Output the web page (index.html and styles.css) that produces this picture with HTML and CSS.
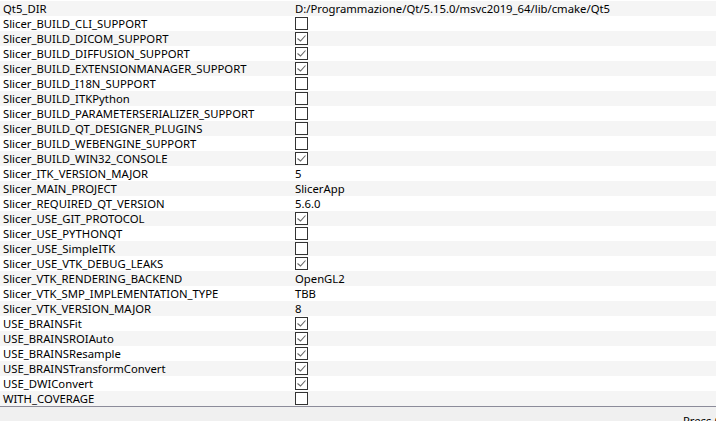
FILE: index.html
```html
<!DOCTYPE html>
<html lang="en">
<head>
    <meta charset="UTF-8">
    <title>CMake</title>
    <link rel="stylesheet" href="styles.css">
</head>
<body>

    <svg width="0" height="0" class="defs">
        <symbol id="tick" viewBox="0 0 11 11">
            <polyline points="1.5,5.5 4.5,8 9.5,2.5" fill="none" stroke="#666" stroke-width="1.1"/>
        </symbol>
    </svg>

    <div class="cache">
        <div class="row"><span class="name">Qt5_DIR</span><span class="value">D:/Programmazione/Qt/5.15.0/msvc2019_64/lib/cmake/Qt5</span></div>
        <div class="row"><span class="name">Slicer_BUILD_CLI_SUPPORT</span><span class="value"><i class="box"></i></span></div>
        <div class="row"><span class="name">Slicer_BUILD_DICOM_SUPPORT</span><span class="value"><i class="box"><svg><use href="#tick"/></svg></i></span></div>
        <div class="row"><span class="name">Slicer_BUILD_DIFFUSION_SUPPORT</span><span class="value"><i class="box"><svg><use href="#tick"/></svg></i></span></div>
        <div class="row"><span class="name">Slicer_BUILD_EXTENSIONMANAGER_SUPPORT</span><span class="value"><i class="box"><svg><use href="#tick"/></svg></i></span></div>
        <div class="row"><span class="name">Slicer_BUILD_I18N_SUPPORT</span><span class="value"><i class="box"></i></span></div>
        <div class="row"><span class="name">Slicer_BUILD_ITKPython</span><span class="value"><i class="box"></i></span></div>
        <div class="row"><span class="name">Slicer_BUILD_PARAMETERSERIALIZER_SUPPORT</span><span class="value"><i class="box"></i></span></div>
        <div class="row"><span class="name">Slicer_BUILD_QT_DESIGNER_PLUGINS</span><span class="value"><i class="box"></i></span></div>
        <div class="row"><span class="name">Slicer_BUILD_WEBENGINE_SUPPORT</span><span class="value"><i class="box"></i></span></div>
        <div class="row"><span class="name">Slicer_BUILD_WIN32_CONSOLE</span><span class="value"><i class="box"><svg><use href="#tick"/></svg></i></span></div>
        <div class="row"><span class="name">Slicer_ITK_VERSION_MAJOR</span><span class="value">5</span></div>
        <div class="row"><span class="name">Slicer_MAIN_PROJECT</span><span class="value">SlicerApp</span></div>
        <div class="row"><span class="name">Slicer_REQUIRED_QT_VERSION</span><span class="value">5.6.0</span></div>
        <div class="row"><span class="name">Slicer_USE_GIT_PROTOCOL</span><span class="value"><i class="box"><svg><use href="#tick"/></svg></i></span></div>
        <div class="row"><span class="name">Slicer_USE_PYTHONQT</span><span class="value"><i class="box"></i></span></div>
        <div class="row"><span class="name">Slicer_USE_SimpleITK</span><span class="value"><i class="box"></i></span></div>
        <div class="row"><span class="name">Slicer_USE_VTK_DEBUG_LEAKS</span><span class="value"><i class="box"><svg><use href="#tick"/></svg></i></span></div>
        <div class="row"><span class="name">Slicer_VTK_RENDERING_BACKEND</span><span class="value">OpenGL2</span></div>
        <div class="row"><span class="name">Slicer_VTK_SMP_IMPLEMENTATION_TYPE</span><span class="value">TBB</span></div>
        <div class="row"><span class="name">Slicer_VTK_VERSION_MAJOR</span><span class="value">8</span></div>
        <div class="row"><span class="name">USE_BRAINSFit</span><span class="value"><i class="box"><svg><use href="#tick"/></svg></i></span></div>
        <div class="row"><span class="name">USE_BRAINSROIAuto</span><span class="value"><i class="box"><svg><use href="#tick"/></svg></i></span></div>
        <div class="row"><span class="name">USE_BRAINSResample</span><span class="value"><i class="box"><svg><use href="#tick"/></svg></i></span></div>
        <div class="row"><span class="name">USE_BRAINSTransformConvert</span><span class="value"><i class="box"><svg><use href="#tick"/></svg></i></span></div>
        <div class="row"><span class="name">USE_DWIConvert</span><span class="value"><i class="box"><svg><use href="#tick"/></svg></i></span></div>
        <div class="row"><span class="name">WITH_COVERAGE</span><span class="value"><i class="box"></i></span></div>
    </div>

    <div class="status">
        <span>Press Configure to update and display new values in red, then press Generate to generate selected build files.</span>
    </div>

</body>
</html>
```

FILE: styles.css
```css
body {
    margin: 0;
    width: 716px;
    height: 421px;
    overflow: hidden;
    background-color: #f0f0f0;
    font-family: "Noto Sans", "Open Sans", sans-serif;
    font-size: 11.3px;
    color: #000;
    display: flex;
    flex-direction: column;
}

.defs {
    position: absolute;
}

.cache {
    background-color: #fff;
    padding-top: 1px;
    border-bottom: 1px solid #8c8c9a;
}

.row {
    display: flex;
    align-items: center;
    height: 15px;
    line-height: 15px;
    white-space: nowrap;
}

.row:nth-child(odd) {
    background-color: #f5f5f5;
}

.name {
    width: 295px;
    padding-left: 3px;
    box-sizing: border-box;
}

.value {
    display: flex;
    align-items: center;
}

.box {
    display: block;
    width: 11px;
    height: 11px;
    border: 1px solid #333;
    background-color: #fff;
}

.box svg {
    display: block;
    width: 11px;
    height: 11px;
}

.status {
    flex: 1;
    padding: 6px 0 0 683px;
    white-space: nowrap;
    overflow: hidden;
}
```
